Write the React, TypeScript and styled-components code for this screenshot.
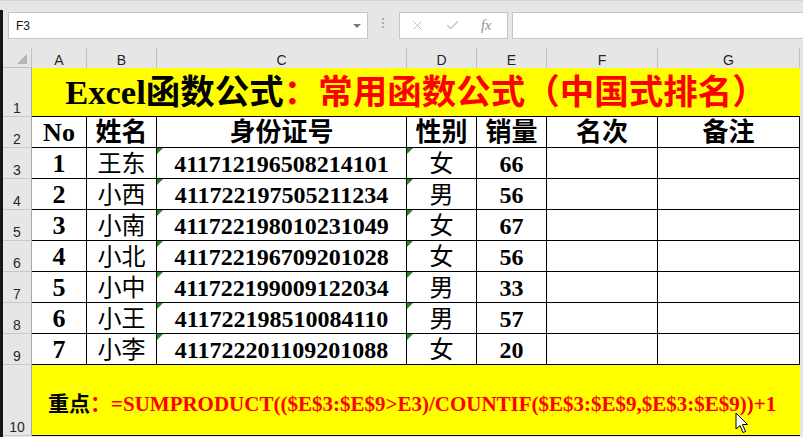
import React from 'react';
import styled, { createGlobalStyle } from 'styled-components';
import { X, Check } from 'lucide-react';

const GlobalStyle = createGlobalStyle`
  html, body {
    margin: 0;
    padding: 0;
    background: #e6e6e6;
  }
  body {
    width: 803px;
    height: 437px;
    overflow: hidden;
  }
`;

const Page = styled.div`
  position: relative;
  width: 803px;
  height: 437px;
  overflow: hidden;
  background: linear-gradient(#e6e6e6, #e6e6e6) 0 0 / 100% 10px no-repeat,
    linear-gradient(90deg, #161616 3px, #e6e6e6 3px);
  font-family: 'Liberation Sans', Arial, sans-serif;
`;

const FormulaBar = styled.div`
  box-sizing: border-box;
  height: 48px;
  display: flex;
  align-items: flex-start;
  padding: 11px 0 0 8px;
  border-top: 1px solid #d4d4d4;
`;

const NameBox = styled.div`
  box-sizing: border-box;
  width: 360px;
  height: 27px;
  background: #fff;
  border: 1px solid #c6c6c6;
  display: flex;
  align-items: center;
  justify-content: space-between;
  padding: 0 6px 0 7px;
  font-size: 12px;
  color: #111;
`;

const DropArrow = styled.span`
  width: 0;
  height: 0;
  border-left: 4px solid transparent;
  border-right: 4px solid transparent;
  border-top: 4px solid #7a7a7a;
`;

const Dots = styled.div`
  width: 3px;
  margin: 6px 14px 0 14px;
  display: flex;
  flex-direction: column;
  gap: 2px;
  span {
    width: 2px;
    height: 2px;
    background: #b0b0b0;
  }
`;

const ButtonBox = styled.div`
  box-sizing: border-box;
  width: 109px;
  height: 27px;
  background: #fff;
  border: 1px solid #c6c6c6;
  display: flex;
  align-items: center;
  padding-left: 10px;
  gap: 20px;
  color: #bdbdbd;
`;

const Fx = styled.span`
  font-family: 'Liberation Serif', serif;
  font-style: italic;
  font-size: 14px;
  color: #8c8c8c;
  margin-left: 1px;
`;

const FormulaInput = styled.div`
  box-sizing: border-box;
  flex: 1;
  height: 27px;
  margin-left: 4px;
  background: #fff;
  border: 1px solid #c6c6c6;
  border-right: none;
`;

const Sheet = styled.div`
  display: grid;
  width: 797px;
  margin-left: 3px;
  grid-template-columns: 29px 55px 70px 250px 70px 70px 111px 142px;
  grid-template-rows: 20px 49px repeat(8, 31px) 71px;
`;

const Corner = styled.div`
  position: relative;
  box-sizing: border-box;
  border-right: 1px solid #c0c0c0;
  border-bottom: 1px solid #c0c0c0;
  &::after {
    content: '';
    position: absolute;
    right: 4px;
    bottom: 3px;
    border-left: 10px solid transparent;
    border-bottom: 10px solid #b4b4b4;
  }
`;

const ColHead = styled.div`
  box-sizing: border-box;
  border-right: 1px solid #c0c0c0;
  display: flex;
  align-items: flex-end;
  justify-content: center;
  padding-bottom: 1px;
  font-size: 14px;
  line-height: 1;
  color: #262626;
`;

const RowHead = styled.div`
  box-sizing: border-box;
  border-right: 1px solid #a8a8a8;
  border-bottom: 1px solid #c8c8c8;
  display: flex;
  align-items: flex-end;
  justify-content: center;
  padding: 0 0 1px 0;
  font-size: 14px;
  line-height: 1;
  color: #262626;
`;

const Banner = styled.div<{ $size: number; $left?: boolean }>`
  grid-column: 2 / 9;
  box-sizing: border-box;
  background: #ffff00;
  border-bottom: 1px solid #000;
  display: flex;
  align-items: center;
  justify-content: ${(p) => (p.$left ? 'flex-start' : 'center')};
  padding-left: ${(p) => (p.$left ? '16px' : '0')};
  padding-top: ${(p) => (p.$left ? '8px' : '1px')};
  font-family: 'Liberation Serif', 'Noto Sans CJK SC', serif;
  font-weight: 700;
  font-size: ${(p) => p.$size}px;
  line-height: 1;
  white-space: nowrap;
  color: #000;
`;

const Red = styled.span`
  color: #ff0000;
`;

const Cell = styled.div<{ $size?: number; $bold?: boolean; $flag?: boolean }>`
  position: relative;
  box-sizing: border-box;
  background: #fff;
  border-right: 1px solid #000;
  border-bottom: 1px solid #000;
  display: flex;
  align-items: center;
  justify-content: center;
  padding-top: 2px;
  font-family: 'Liberation Serif', 'Noto Sans CJK SC', serif;
  font-size: ${(p) => p.$size ?? 24}px;
  font-weight: ${(p) => (p.$bold ? 700 : 400)};
  line-height: 1;
  white-space: nowrap;
  color: #000;
  &::before {
    content: '';
    display: ${(p) => (p.$flag ? 'block' : 'none')};
    position: absolute;
    left: 0;
    top: 0;
    border-top: 6px solid #1f8a1f;
    border-right: 6px solid transparent;
  }
`;

const Pointer = styled.svg`
  position: absolute;
  left: 735px;
  top: 412px;
`;

const cols = ['A', 'B', 'C', 'D', 'E', 'F', 'G'];
const headers = ['No', '姓名', '身份证号', '性别', '销量', '名次', '备注'];

const people = [
  { no: '1', name: '王东', id: '411712196508214101', sex: '女', sales: '66' },
  { no: '2', name: '小西', id: '411722197505211234', sex: '男', sales: '56' },
  { no: '3', name: '小南', id: '411722198010231049', sex: '女', sales: '67' },
  { no: '4', name: '小北', id: '411722196709201028', sex: '女', sales: '56' },
  { no: '5', name: '小中', id: '411722199009122034', sex: '男', sales: '33' },
  { no: '6', name: '小王', id: '411722198510084110', sex: '男', sales: '57' },
  { no: '7', name: '小李', id: '411722201109201088', sex: '女', sales: '20' },
];

export default function App() {
  return (
    <Page>
      <GlobalStyle />
      <FormulaBar>
        <NameBox>
          F3
          <DropArrow />
        </NameBox>
        <Dots>
          <span />
          <span />
          <span />
        </Dots>
        <ButtonBox>
          <X size={15} strokeWidth={1.5} />
          <Check size={15} strokeWidth={2} />
          <Fx>fx</Fx>
        </ButtonBox>
        <FormulaInput />
      </FormulaBar>

      <Sheet>
        <Corner />
        {cols.map((c) => (
          <ColHead key={c}>{c}</ColHead>
        ))}

        <RowHead>1</RowHead>
        <Banner $size={34.5}>
          Excel函数公式<Red>：常用函数公式（中国式排名）</Red>
        </Banner>

        <RowHead>2</RowHead>
        {headers.map((h) => (
          <Cell key={h} $size={26} $bold>
            {h}
          </Cell>
        ))}

        {people.map((p, i) => (
          <React.Fragment key={p.id}>
            <RowHead>{i + 3}</RowHead>
            <Cell $size={26} $bold>
              {p.no}
            </Cell>
            <Cell>{p.name}</Cell>
            <Cell $bold $flag>
              {p.id}
            </Cell>
            <Cell $flag>{p.sex}</Cell>
            <Cell $bold>{p.sales}</Cell>
            <Cell />
            <Cell />
          </React.Fragment>
        ))}

        <RowHead>10</RowHead>
        <Banner $size={21} $left>
          重点<Red>：=SUMPRODUCT(($E$3:$E$9&gt;E3)/COUNTIF($E$3:$E$9,$E$3:$E$9))+1</Red>
        </Banner>
      </Sheet>

      <Pointer width="14" height="22" viewBox="0 0 14 22">
        <path
          d="M1 1 L1 17 L5 13.5 L8 20.5 L10.5 19.5 L7.5 12.5 L12.5 12.5 Z"
          fill="#fff"
          stroke="#000"
          strokeWidth="1"
          strokeLinejoin="round"
        />
      </Pointer>
    </Page>
  );
}
